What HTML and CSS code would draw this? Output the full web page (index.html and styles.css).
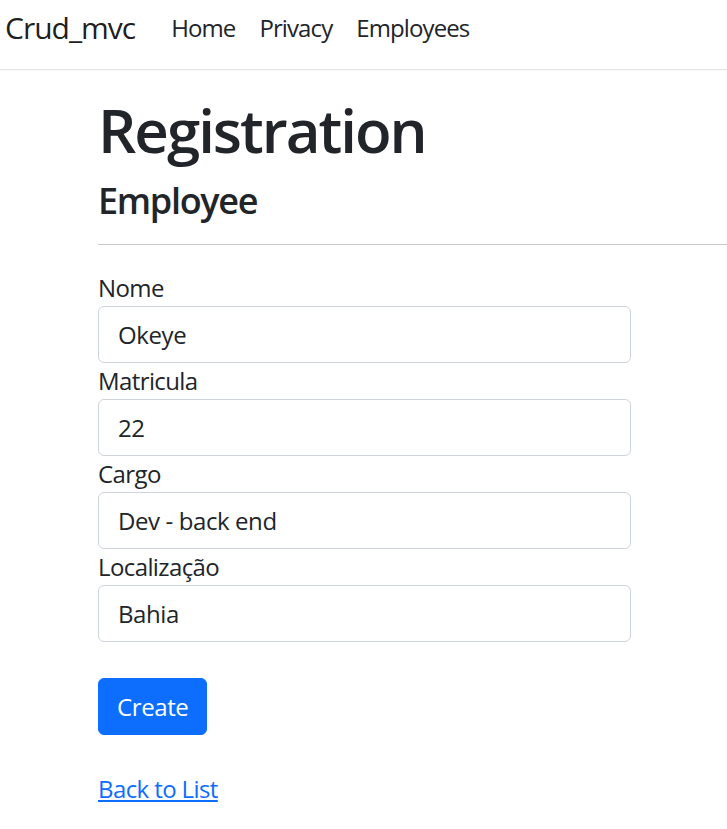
FILE: index.html
```html
<!DOCTYPE html>
<html lang="pt">
<head>
<meta charset="utf-8">
<title>Registration - Crud_mvc</title>
<link rel="stylesheet" href="styles.css">
</head>
<body>
<header class="navbar">
  <div class="navbar-row">
    <a class="brand" href="#">Crud_mvc</a>
    <nav class="nav">
      <a class="nav-link" href="#">Home</a>
      <a class="nav-link" href="#">Privacy</a>
      <a class="nav-link" href="#">Employees</a>
    </nav>
  </div>
</header>
<main class="container">
  <h1 class="title">Registration</h1>
  <h4 class="subtitle">Employee</h4>
  <hr class="divider">
  <form class="form">
    <div class="group">
      <label class="label" for="nome">Nome</label>
      <input class="input" id="nome" value="Okeye">
    </div>
    <div class="group">
      <label class="label" for="mat">Matricula</label>
      <input class="input" id="mat" value="22">
    </div>
    <div class="group">
      <label class="label" for="cargo">Cargo</label>
      <input class="input" id="cargo" value="Dev - back end">
    </div>
    <div class="group">
      <label class="label" for="loc">Localização</label>
      <input class="input" id="loc" value="Bahia">
    </div>
    <div class="actions">
      <button class="btn" type="button">Create</button>
    </div>
  </form>
  <div class="back">
    <a class="link" href="#">Back to List</a>
  </div>
</main>
</body>
</html>
```
FILE: styles.css
```css
* { box-sizing: border-box; }
html, body { margin: 0; padding: 0; }
body {
  font-family: "Open Sans", "Noto Sans", sans-serif;
  font-size: 24px;
  line-height: 1.5;
  letter-spacing: -0.6px;
  color: #212529;
  background: #fff;
  overflow: hidden;
}
.navbar {
  height: 70px;
  padding: 5px 0 0 5px;
  border-bottom: 1px solid #e5e5e5;
  box-shadow: 0 1px 2px rgba(0,0,0,0.03);
}
.navbar-row {
  display: flex;
  align-items: center;
  height: 45px;
}
.brand {
  font-size: 30px;
  color: rgba(0,0,0,0.9);
  text-decoration: none;
  margin-right: 24px;
  line-height: 45px;
  letter-spacing: -1px;
}
.nav { display: flex; }
.nav-link {
  color: #212529;
  text-decoration: none;
  padding: 0 12px;
  font-size: 24px;
  letter-spacing: -0.9px;
}
.container {
  padding-left: 98px;
}
.title {
  font-size: 60px;
  font-weight: 600;
  line-height: 72px;
  margin: 24px 0 0;
  letter-spacing: -2px;
}
.subtitle {
  font-size: 36px;
  font-weight: 600;
  line-height: 43px;
  margin: 13px 0 0;
  letter-spacing: -1.3px;
}
.divider {
  margin: 22px 0 25px;
  border: 0;
  border-top: 1px solid #c8c8c8;
  height: 0;
}
.form { width: 533px; }
.group { display: flex; flex-direction: column; }
.label { line-height: 36px; }
.input {
  font: inherit;
  letter-spacing: -0.4px;
  color: #212529;
  height: 57px;
  padding: 0 19px;
  border: 1px solid #ced4da;
  border-radius: 6px;
  background: #fff;
}
.actions { margin-top: 36px; }
.btn {
  font: inherit;
  letter-spacing: -0.4px;
  color: #fff;
  background: #0d6efd;
  border: 1px solid #0d6efd;
  border-radius: 6px;
  height: 57px;
  padding: 0 18px;
}
.back { margin-top: 36px; }
.link { color: #0d6efd; text-decoration: underline; }
```
